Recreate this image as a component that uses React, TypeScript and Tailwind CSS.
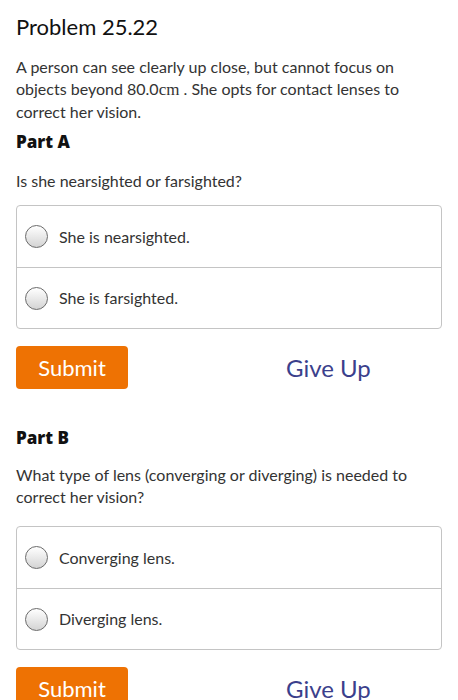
import React from 'react'

const font = { fontFamily: '"Lato", "Open Sans", sans-serif' }
const heavy = { fontFamily: '"Open Sans", "Lato", sans-serif' }

function Radio() {
  return (
    <span className="mr-[11px] inline-block h-[23px] w-[23px] shrink-0 rounded-full border border-[#6b6b6b] bg-gradient-to-b from-[#ffffff] to-[#d4d4d4]" />
  )
}

function Choices({ items }: { items: string[] }) {
  return (
    <div className="rounded-[4px] border border-[#c4c4c4] bg-white">
      {items.map((t, i) => (
        <label
          key={t}
          className={
            'flex h-[61px] items-center pl-[8px] text-[16px] text-[#333] ' +
            (i > 0 ? 'border-t border-[#c4c4c4]' : '')
          }
        >
          <Radio />
          {t}
        </label>
      ))}
    </div>
  )
}

function Actions() {
  return (
    <div className="flex items-center">
      <button className="h-[43px] w-[112px] rounded-[4px] bg-[#ee7203] text-[22px] text-white">
        Submit
      </button>
      <button className="ml-[158px] text-[24px] text-[#3b3f8c]">Give Up</button>
    </div>
  )
}

function PartTitle({ children, className }: { children: React.ReactNode; className: string }) {
  return (
    <h2 style={heavy} className={'text-[17px] font-extrabold leading-[22px] text-[#111] ' + className}>
      {children}
    </h2>
  )
}

export default function App() {
  return (
    <div className="bg-white px-4 pt-[12px] text-[#333]" style={font}>
      <h1 className="text-[22px] leading-[30px] text-[#111]">Problem 25.22</h1>
      <p className="mt-[14px] text-[16px] leading-[22px]">
        A person can see clearly up close, but cannot focus on
        <br />
        objects beyond 80.0
        <span style={{ fontFamily: '"Liberation Serif", serif' }} className="text-[17px]">
          cm
        </span>{' '}
        . She opts for contact lenses to
        <br />
        correct her vision.
      </p>
      <PartTitle className="mt-[8px]">Part A</PartTitle>
      <p className="mt-[17px] text-[16px] leading-[22px]">Is she nearsighted or farsighted?</p>
      <div className="mt-[13px]">
        <Choices items={['She is nearsighted.', 'She is farsighted.']} />
      </div>
      <div className="mt-[17px]">
        <Actions />
      </div>
      <PartTitle className="mt-[38px]">Part B</PartTitle>
      <p className="mt-[15px] text-[16px] leading-[22px]">
        What type of lens (converging or diverging) is needed to
        <br />
        correct her vision?
      </p>
      <div className="mt-[18px]">
        <Choices items={['Converging lens.', 'Diverging lens.']} />
      </div>
      <div className="mt-[17px]">
        <Actions />
      </div>
    </div>
  )
}
